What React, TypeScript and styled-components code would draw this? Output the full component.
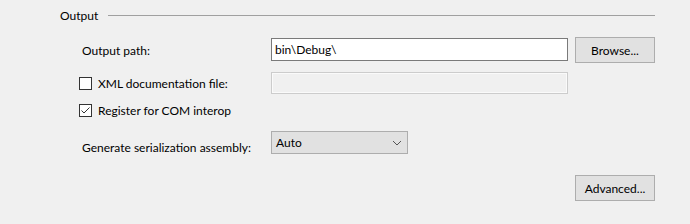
import React, { useState } from 'react';
import styled, { createGlobalStyle } from 'styled-components';

const GlobalStyle = createGlobalStyle`
  html, body {
    margin: 0;
    padding: 0;
    background: #f0f0f0;
  }
  body {
    font-family: Lato, "Noto Sans", sans-serif;
    font-size: 12px;
    color: #000;
  }
`;

const Page = styled.div`
  width: 690px;
  height: 224px;
  padding: 6px 0 0 60px;
  box-sizing: border-box;
`;

const GroupHeader = styled.div`
  display: flex;
  align-items: center;
  width: 595px;
  height: 18px;
`;

const GroupTitle = styled.span`
  margin-right: 10px;
`;

const GroupLine = styled.div`
  flex: 1;
  height: 1px;
  background: #a0a0a0;
`;

const Rows = styled.div`
  display: flex;
  flex-direction: column;
  padding-left: 19px;
`;

const Row = styled.div<{ $top: number; $height: number }>`
  display: grid;
  grid-template-columns: 185px 297px 80px;
  column-gap: 7px;
  align-items: center;
  margin-top: ${(p) => p.$top}px;
  height: ${(p) => p.$height}px;
`;

const Label = styled.span<{ $shift?: number }>`
  padding-left: 3px;
  position: relative;
  top: ${(p) => p.$shift ?? 0}px;
`;

const TextBox = styled.input<{ $boxHeight?: number }>`
  box-sizing: border-box;
  height: ${(p) => (p.$boxHeight ? `${p.$boxHeight}px` : '100%')};
  align-self: ${(p) => (p.$boxHeight ? 'start' : 'stretch')};
  width: 100%;
  margin: ${(p) => (p.$boxHeight ? '1px 0 0' : '0')};
  padding: 0 3px;
  font: inherit;
  color: #000;
  background: #fff;
  border: 1px solid #7a7a7a;
  outline: none;
  &:disabled {
    background: #f0f0f0;
    border: 1px solid #cccccc;
    box-shadow: inset 0 0 0 1px #fafafa;
  }
`;

const Button = styled.button`
  box-sizing: border-box;
  height: 26px;
  width: 80px;
  margin: 0;
  padding: 0;
  font: inherit;
  color: #000;
  background: #e1e1e1;
  border: 1px solid #adadad;
`;

const CheckLabel = styled.label`
  display: flex;
  align-items: center;
  gap: 6px;
  white-space: nowrap;
`;

const Box = styled.span`
  box-sizing: border-box;
  width: 13px;
  height: 13px;
  border: 1px solid #333;
  background: #fff;
  display: flex;
  align-items: center;
  justify-content: center;
`;

const Select = styled.div`
  box-sizing: border-box;
  width: 137px;
  height: 23px;
  display: flex;
  align-items: center;
  justify-content: space-between;
  padding: 0 5px 0 4px;
  background: #e1e1e1;
  border: 1px solid #adadad;
`;

const Footer = styled.div`
  display: flex;
  justify-content: flex-end;
  width: 595px;
  margin-top: 21px;
`;

const Check = ({ checked, text }: { checked: boolean; text: string }) => (
  <CheckLabel>
    <Box>
      {checked && (
        <svg width="11" height="11" viewBox="0 0 11 11">
          <path d="M1.5 5.5 L4 8 L9.5 2.5" fill="none" stroke="#333" strokeWidth="1" />
        </svg>
      )}
    </Box>
    {text}
  </CheckLabel>
);

const App = () => {
  const [path, setPath] = useState('bin\\Debug\\');

  return (
    <Page>
      <GlobalStyle />
      <GroupHeader>
        <GroupTitle>Output</GroupTitle>
        <GroupLine />
      </GroupHeader>
      <Rows>
        <Row $top={13} $height={26}>
          <Label>Output path:</Label>
          <TextBox $boxHeight={23} value={path} onChange={(e) => setPath(e.target.value)} />
          <Button>Browse...</Button>
        </Row>
        <Row $top={9} $height={22}>
          <Check checked={false} text="XML documentation file:" />
          <TextBox disabled />
        </Row>
        <Row $top={7} $height={18}>
          <Check checked={true} text="Register for COM interop" />
        </Row>
        <Row $top={12} $height={23}>
          <Label $shift={5}>Generate serialization assembly:</Label>
          <Select>
            <span>Auto</span>
            <svg width="10" height="6" viewBox="0 0 10 6">
              <path d="M1 1 L5 5 L9 1" fill="none" stroke="#555" strokeWidth="1" />
            </svg>
          </Select>
        </Row>
      </Rows>
      <Footer>
        <Button>Advanced...</Button>
      </Footer>
    </Page>
  );
};

export default App;
